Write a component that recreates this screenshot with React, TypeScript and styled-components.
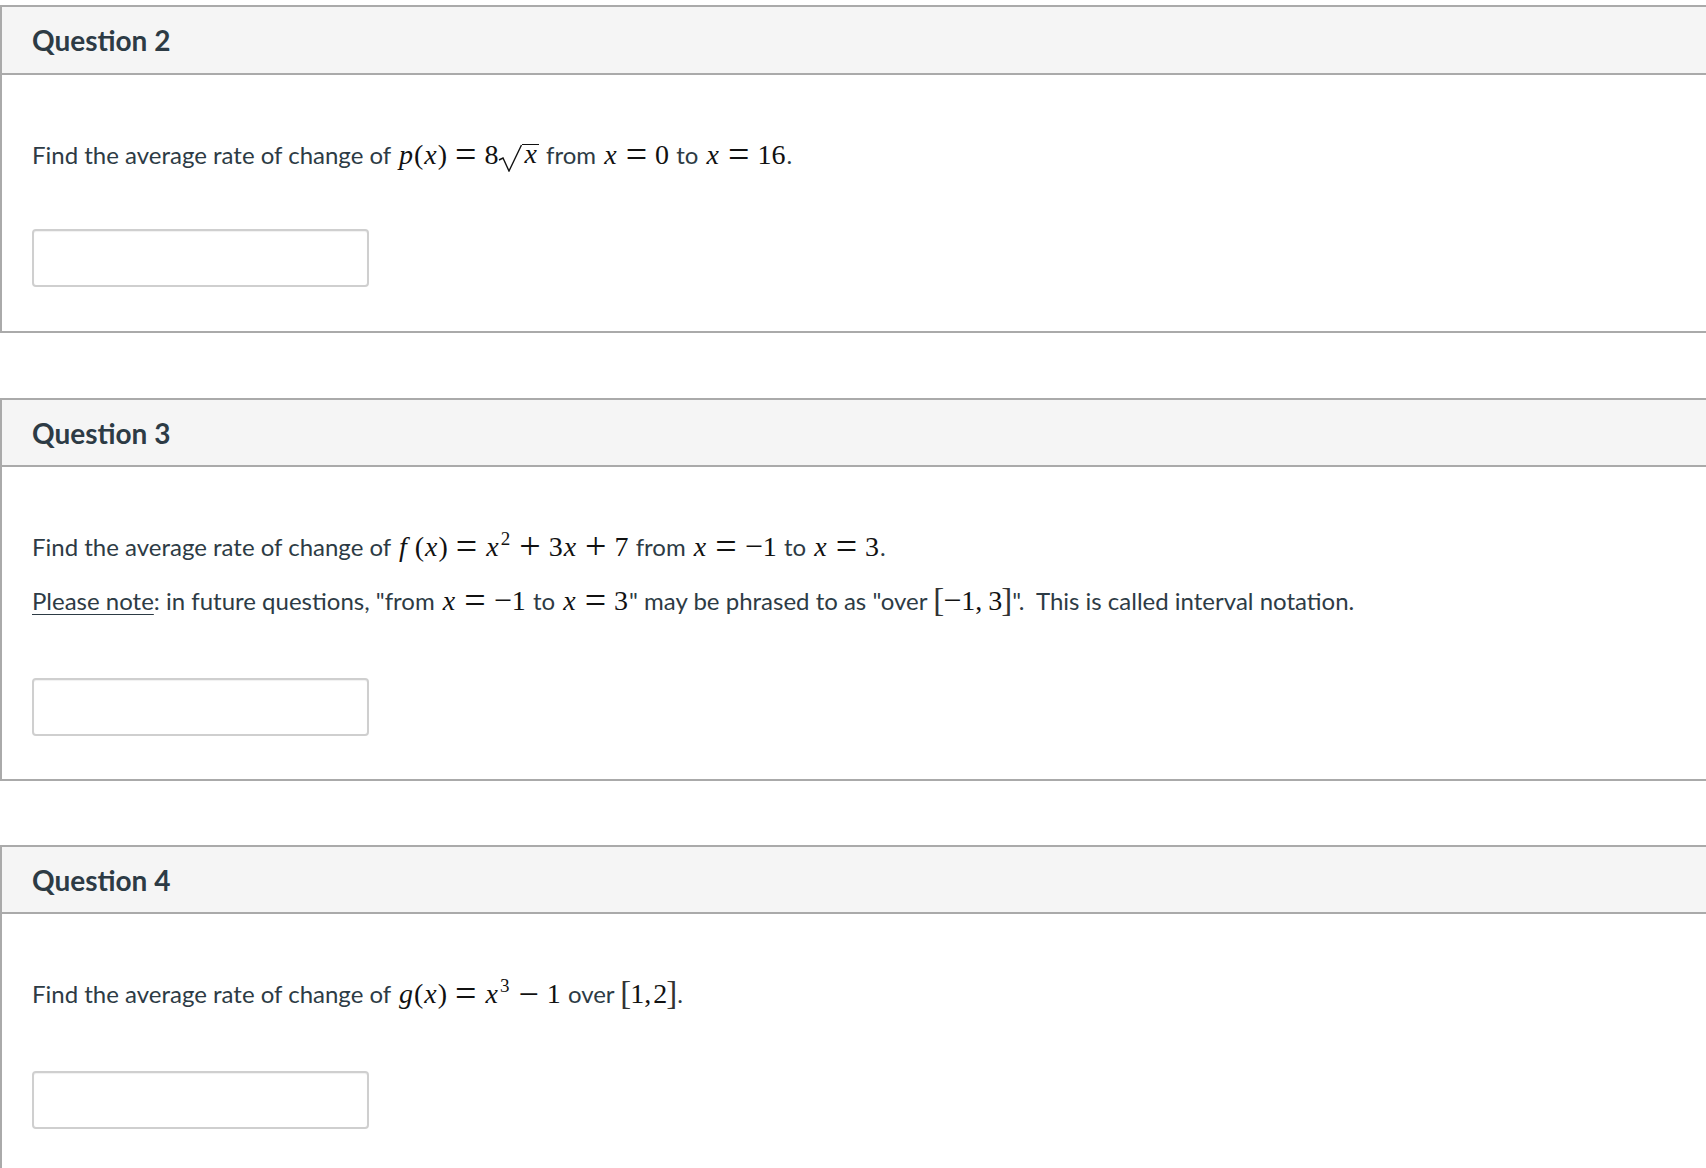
import React from "react";
import styled, { createGlobalStyle } from "styled-components";

const Global = createGlobalStyle`
  html, body {
    margin: 0;
    padding: 0;
    background: #ffffff;
    overflow: hidden;
  }
  body {
    height: 1168px;
    font-family: Lato, "Open Sans", sans-serif;
    color: #2d3b45;
  }
`;

const Page = styled.div`
  width: 1730px;
  height: 1168px;
  overflow: hidden;
  padding-top: 5px;
  box-sizing: border-box;
  display: flex;
  flex-direction: column;
  gap: 64px;
`;

const Card = styled.section`
  border: 2px solid #aaaaaa;
  box-sizing: border-box;
  flex-shrink: 0;

  &:first-child {
    margin-bottom: 1px;
  }
`;

const CardHeader = styled.header<{ $height?: number }>`
  height: ${(p) => p.$height ?? 67}px;
  box-sizing: border-box;
  background: #f5f5f5;
  border-bottom: 2px solid #aaaaaa;
  padding-left: 30px;
  display: flex;
  align-items: center;
`;

const Title = styled.h2`
  margin: 0;
  font-size: 28px;
  font-weight: 700;
  color: #2d3b45;
`;

const CardBody = styled.div<{ $bottom?: number }>`
  padding: 63px 30px ${(p) => p.$bottom ?? 43}px;
`;

const Para = styled.p`
  margin: 0 0 20px;
  font-size: 24px;
  line-height: 34px;
  white-space: nowrap;
`;

const Note = styled.span`
  text-decoration: underline;
  text-underline-offset: 4px;
  text-decoration-thickness: 1px;
`;

const Formula = styled.span`
  font-family: "Liberation Serif", "Times New Roman", serif;
  font-size: 28px;
  color: #111111;
  margin: 0 1px;
`;

const V = styled.i`
  font-style: italic;
  margin: 0 1px;
`;

const F = styled(V)`
  margin: 0 8px 0 1px;
`;

const Op = styled.span<{ $size?: number }>`
  font-size: ${(p) => p.$size ?? 38}px;
  line-height: 0;
  vertical-align: -3px;
  margin: 0 8px;
`;

const Minus = styled.span`
  font-size: 32px;
  line-height: 0;
  vertical-align: -1px;
`;

const Bracket = styled.span`
  font-size: 33px;
  line-height: 0;
  vertical-align: -1px;
  margin: 0 -1px;
  color: #333333;
`;

const Comma = styled.span<{ $gap: number }>`
  margin-right: ${(p) => p.$gap}px;
`;

const Sup = styled.sup`
  font-size: 19px;
  line-height: 0;
  vertical-align: 11px;
  margin: 0 1px;
`;

const Radical = styled.span`
  display: inline-flex;
  align-items: flex-start;
  vertical-align: -8px;
`;

const Radicand = styled.span`
  border-top: 1.5px solid #111111;
  line-height: 18px;
  padding: 0 2px;
  font-style: italic;
`;

const AnswerInput = styled.input<{ $top?: number }>`
  display: block;
  width: 337px;
  height: 58px;
  box-sizing: border-box;
  margin-top: ${(p) => p.$top ?? 60}px;
  border: 2px solid #cfcfcf;
  border-radius: 4px;
  background: #ffffff;
  box-shadow: inset 0 1px 1px rgba(0, 0, 0, 0.06);
  outline: none;
`;

const Root = () => (
  <Radical>
    <svg width="24" height="28" viewBox="0 0 24 28" fill="none">
      <path d="M1 16 L5 14 L11 27 L23.5 1" stroke="#111111" strokeWidth="1.4" />
    </svg>
    <Radicand>x</Radicand>
  </Radical>
);

export default function App() {
  return (
    <Page>
      <Global />
      <Card>
        <CardHeader $height={68}>
          <Title>Question 2</Title>
        </CardHeader>
        <CardBody $bottom={44}>
          <Para>
            Find the average rate of change of{" "}
            <Formula>
              <V>p</V>(<V>x</V>)<Op>=</Op>8<Root />
            </Formula>{" "}
            from{" "}
            <Formula>
              <V>x</V>
              <Op>=</Op>0
            </Formula>{" "}
            to{" "}
            <Formula>
              <V>x</V>
              <Op>=</Op>16
            </Formula>
            .
          </Para>
          <AnswerInput type="text" $top={57} />
        </CardBody>
      </Card>
      <Card>
        <CardHeader>
          <Title>Question 3</Title>
        </CardHeader>
        <CardBody>
          <Para>
            Find the average rate of change of{" "}
            <Formula>
              <F>f</F>(<V>x</V>)<Op>=</Op>
              <V>x</V>
              <Sup>2</Sup>
              <Op>+</Op>3<V>x</V>
              <Op>+</Op>7
            </Formula>{" "}
            from{" "}
            <Formula>
              <V>x</V>
              <Op>=</Op>
              <Minus>−</Minus>1
            </Formula>{" "}
            to{" "}
            <Formula>
              <V>x</V>
              <Op>=</Op>3
            </Formula>
            .
          </Para>
          <Para>
            <Note>Please note</Note>: in future questions, "from{" "}
            <Formula>
              <V>x</V>
              <Op>=</Op>
              <Minus>−</Minus>1
            </Formula>{" "}
            to{" "}
            <Formula>
              <V>x</V>
              <Op>=</Op>3
            </Formula>
            " may be phrased to as "over{" "}
            <Formula>
              <Bracket>[</Bracket>
              <Minus>−</Minus>1<Comma $gap={6}>,</Comma>3<Bracket>]</Bracket>
            </Formula>
            ".&nbsp; This is called interval notation.
          </Para>
          <AnswerInput type="text" />
        </CardBody>
      </Card>
      <Card>
        <CardHeader>
          <Title>Question 4</Title>
        </CardHeader>
        <CardBody>
          <Para>
            Find the average rate of change of{" "}
            <Formula>
              <V>g</V>(<V>x</V>)<Op>=</Op>
              <V>x</V>
              <Sup>3</Sup>
              <Op $size={36}>−</Op>1
            </Formula>{" "}
            over{" "}
            <Formula>
              <Bracket>[</Bracket>1<Comma $gap={2}>,</Comma>2<Bracket>]</Bracket>
            </Formula>
            .
          </Para>
          <AnswerInput type="text" />
        </CardBody>
      </Card>
    </Page>
  );
}
